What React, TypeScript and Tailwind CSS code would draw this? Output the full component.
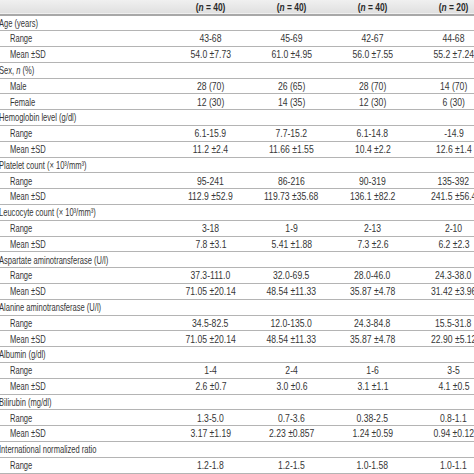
import React from 'react';

type Group = {
  label: React.ReactNode;
  rows: { label: string; values: string[] }[];
};

const groups: Group[] = [
  {
    label: 'Age (years)',
    rows: [
      { label: 'Range', values: ['43-68', '45-69', '42-67', '44-68'] },
      { label: 'Mean ±SD', values: ['54.0 ±7.73', '61.0 ±4.95', '56.0 ±7.55', '55.2 ±7.24'] },
    ],
  },
  {
    label: (
      <>
        Sex, <i>n</i> (%)
      </>
    ),
    rows: [
      { label: 'Male', values: ['28 (70)', '26 (65)', '28 (70)', '14 (70)'] },
      { label: 'Female', values: ['12 (30)', '14 (35)', '12 (30)', '6 (30)'] },
    ],
  },
  {
    label: 'Hemoglobin level (g/dl)',
    rows: [
      { label: 'Range', values: ['6.1-15.9', '7.7-15.2', '6.1-14.8', '-14.9'] },
      { label: 'Mean ±SD', values: ['11.2 ±2.4', '11.66 ±1.55', '10.4 ±2.2', '12.6 ±1.4'] },
    ],
  },
  {
    label: 'Platelet count (× 10³/mm³)',
    rows: [
      { label: 'Range', values: ['95-241', '86-216', '90-319', '135-392'] },
      { label: 'Mean ±SD', values: ['112.9 ±52.9', '119.73 ±35.68', '136.1 ±82.2', '241.5 ±56.4'] },
    ],
  },
  {
    label: 'Leucocyte count (× 10³/mm³)',
    rows: [
      { label: 'Range', values: ['3-18', '1-9', '2-13', '2-10'] },
      { label: 'Mean ±SD', values: ['7.8 ±3.1', '5.41 ±1.88', '7.3 ±2.6', '6.2 ±2.3'] },
    ],
  },
  {
    label: 'Aspartate aminotransferase (U/l)',
    rows: [
      { label: 'Range', values: ['37.3-111.0', '32.0-69.5', '28.0-46.0', '24.3-38.0'] },
      { label: 'Mean ±SD', values: ['71.05 ±20.14', '48.54 ±11.33', '35.87 ±4.78', '31.42 ±3.96'] },
    ],
  },
  {
    label: 'Alanine aminotransferase (U/l)',
    rows: [
      { label: 'Range', values: ['34.5-82.5', '12.0-135.0', '24.3-84.8', '15.5-31.8'] },
      { label: 'Mean ±SD', values: ['71.05 ±20.14', '48.54 ±11.33', '35.87 ±4.78', '22.90 ±5.12'] },
    ],
  },
  {
    label: 'Albumin (g/dl)',
    rows: [
      { label: 'Range', values: ['1-4', '2-4', '1-6', '3-5'] },
      { label: 'Mean ±SD', values: ['2.6 ±0.7', '3.0 ±0.6', '3.1 ±1.1', '4.1 ±0.5'] },
    ],
  },
  {
    label: 'Bilirubin (mg/dl)',
    rows: [
      { label: 'Range', values: ['1.3-5.0', '0.7-3.6', '0.38-2.5', '0.8-1.1'] },
      { label: 'Mean ±SD', values: ['3.17 ±1.19', '2.23 ±0.857', '1.24 ±0.59', '0.94 ±0.12'] },
    ],
  },
  {
    label: 'International normalized ratio',
    rows: [
      { label: 'Range', values: ['1.2-1.8', '1.2-1.5', '1.0-1.58', '1.0-1.1'] },
      { label: 'Mean ±SD', values: ['1.5 ±0.2', '1.3 ±0.1', '1.2 ±0.2', '1.0 ±0.0'] },
    ],
  },
];

const counts = ['40', '40', '40', '20'];

const App = () => {
  return (
    <div className="w-[474px] h-[474px] overflow-hidden bg-white">
      <table
        className="w-[494px] table-fixed border-collapse text-[10.5px] leading-none text-[#363636]"
        style={{ fontFamily: '"Liberation Sans", Arial, sans-serif' }}
      >
        <colgroup>
          <col className="w-[170px]" />
          <col className="w-[81px]" />
          <col className="w-[81px]" />
          <col className="w-[81px]" />
          <col className="w-[81px]" />
        </colgroup>
        <thead>
          {/* Group sizes */}
          <tr className="h-[15px] bg-gradient-to-b from-[#f0f0f0] to-[#e0e0e0] border-b-2 border-[#a8a8a8]">
            <th />
            {counts.map((n, i) => (
              <th key={i} className="font-bold text-center text-[#2a2a2a] whitespace-nowrap">
                <span className="inline-block scale-x-[0.8]">
                  (<i>n</i> = {n})
                </span>
              </th>
            ))}
          </tr>
        </thead>
        <tbody>
          {groups.map((g, gi) => (
            <React.Fragment key={gi}>
              <tr className="h-[15.8px] border-b border-[#b4b4b4]">
                <td colSpan={5} className="pl-0 whitespace-nowrap">
                  <span className="inline-block origin-left scale-x-[0.72] -ml-px">{g.label}</span>
                </td>
              </tr>
              {g.rows.map((r, ri) => (
                <tr key={ri} className="h-[15.8px] border-b border-[#b4b4b4]">
                  <td className="pl-[10px] whitespace-nowrap">
                    <span className="inline-block origin-left scale-x-[0.72]">{r.label}</span>
                  </td>
                  {r.values.map((v, vi) => (
                    <td key={vi} className="text-center whitespace-nowrap">
                      <span className="inline-block scale-x-[0.82]">{v}</span>
                    </td>
                  ))}
                </tr>
              ))}
            </React.Fragment>
          ))}
        </tbody>
      </table>
    </div>
  );
};

export default App;
